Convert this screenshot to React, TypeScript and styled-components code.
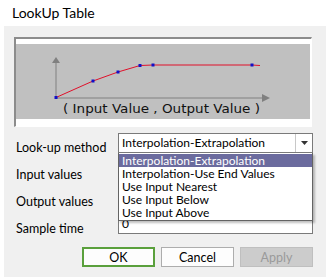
import styled, { createGlobalStyle } from "styled-components";

const GlobalStyle = createGlobalStyle`
  html, body {
    margin: 0;
    padding: 0;
    background: #ffffff;
  }
  body {
    width: 331px;
    height: 280px;
    overflow: hidden;
    font-family: Lato, "Noto Sans", sans-serif;
    font-size: 12.5px;
    color: #000;
  }
`;

const METHODS = [
  "Interpolation-Extrapolation",
  "Interpolation-Use End Values",
  "Use Input Nearest",
  "Use Input Below",
  "Use Input Above",
];

const POINTS: [number, number][] = [
  [40, 53.5],
  [77, 37],
  [102, 28],
  [124, 21.5],
  [137, 21],
  [236, 21],
];

function Chart() {
  const line = [...POINTS, [244, 21.5]].map((p) => p.join(",")).join(" ");
  return (
    <ChartSvg width={294} height={75} viewBox="0 0 294 75">
      <rect width="294" height="75" fill="#c0c0c0" />
      {/* axes */}
      <line x1="40" y1="54" x2="40" y2="18" stroke="#808080" strokeWidth="1" />
      <polygon points="36,19 44,19 40,13" fill="#808080" />
      <line x1="40" y1="54" x2="247" y2="54" stroke="#808080" strokeWidth="1" />
      <polygon points="246,50 246,58 254,54" fill="#808080" />
      <polyline points={line} fill="none" stroke="#e0102a" strokeWidth="1" />
      {POINTS.map(([x, y]) => (
        <rect key={x} x={x - 1.5} y={y - 1.5} width="3" height="3" fill="#1010c8" />
      ))}
      <text
        x="47"
        y="69"
        textLength="197"
        lengthAdjust="spacingAndGlyphs"
        fontFamily="'DejaVu Sans', sans-serif"
        fontSize="12.5"
        fill="#111"
      >
        ( Input Value , Output Value )
      </text>
    </ChartSvg>
  );
}

export default function App() {
  return (
    <>
      <GlobalStyle />
      <TitleBar>LookUp Table</TitleBar>
      <Panel>
        <ChartBox>
          <Chart />
        </ChartBox>

        <Form>
          <Label>Look-up method</Label>
          <SelectWrap>
            <Select>
              <span>Interpolation-Extrapolation</span>
              <ArrowButton>
                <svg width="7" height="4" viewBox="0 0 7 4">
                  <polygon points="0,0 7,0 3.5,4" fill="#333" />
                </svg>
              </ArrowButton>
            </Select>
            <DropList>
              {METHODS.map((m, i) => (
                <DropItem key={m} $active={i === 0}>
                  {m}
                </DropItem>
              ))}
            </DropList>
          </SelectWrap>

          <Label>Input values</Label>
          <TextBox />

          <Label>Output values</Label>
          <TextBox />

          <Label $last>Sample time</Label>
          <TextBox $last>0</TextBox>
        </Form>

        <Buttons>
          <Button $variant="default">OK</Button>
          <Button>Cancel</Button>
          <Button $variant="disabled">Apply</Button>
        </Buttons>
      </Panel>
    </>
  );
}

const TitleBar = styled.div`
  height: 26px;
  box-sizing: border-box;
  padding: 4px 0 0 12px;
  font-size: 14px;
  line-height: 18px;
  color: #000;
`;

const Panel = styled.div`
  margin: 0 5px 0 4px;
  height: 251px;
  box-sizing: border-box;
  background: #f0f0f0;
  padding: 11px 0 0 10px;
  display: flex;
  flex-direction: column;
`;

const ChartBox = styled.div`
  width: 298px;
  height: 90px;
  box-sizing: border-box;
  background: #ffffff;
  border-top: 2px solid #8c8c8c;
  border-left: 2px solid #8c8c8c;
  border-right: 1px solid #ffffff;
  border-bottom: 1px solid #ffffff;
  padding-top: 5px;
`;

const ChartSvg = styled.svg`
  display: block;
`;

const Form = styled.div`
  display: grid;
  grid-template-columns: 102px 195px;
  grid-auto-rows: 20px;
  row-gap: 7px;
  margin: 6px 0 0 2px;
`;

const Label = styled.div<{ $last?: boolean }>`
  padding-top: ${(p) => (p.$last ? 7 : 7)}px;
  line-height: 16px;
  white-space: nowrap;
`;

const SelectWrap = styled.div`
  position: relative;
  z-index: 2;
`;

const Select = styled.div`
  height: 20px;
  box-sizing: border-box;
  border: 1px solid #7a7a7a;
  background: #fff;
  display: flex;
  align-items: center;
  padding-left: 3px;
  font-size: 12px;
  span {
    flex: 1;
    line-height: 16px;
  }
`;

const ArrowButton = styled.div`
  width: 16px;
  height: 100%;
  border-left: 1px solid #c8c8c8;
  display: flex;
  align-items: center;
  justify-content: center;
`;

const DropList = styled.div`
  position: absolute;
  left: 0;
  top: 20px;
  width: 195px;
  box-sizing: border-box;
  border: 1px solid #646464;
  border-top: none;
  background: #fff;
  box-shadow: 2px 2px 2px rgba(0, 0, 0, 0.25);
  padding: 1px 0 1px;
  font-size: 12px;
`;

const DropItem = styled.div<{ $active?: boolean }>`
  height: 13px;
  line-height: 13px;
  padding-left: 3px;
  white-space: nowrap;
  background: ${(p) => (p.$active ? "#6b6b9e" : "transparent")};
  color: ${(p) => (p.$active ? "#fff" : "#000")};
`;

const TextBox = styled.div<{ $last?: boolean }>`
  height: ${(p) => (p.$last ? 18 : 20)}px;
  margin-top: ${(p) => (p.$last ? 2 : 0)}px;
  box-sizing: border-box;
  border: 1px solid #7a7a7a;
  background: #fff;
  padding: 0 3px;
  display: flex;
  align-items: flex-end;
  line-height: 12px;
  font-size: 12px;
  padding-bottom: 3px;
`;

const Buttons = styled.div`
  display: flex;
  justify-content: flex-end;
  gap: 6px;
  width: 299px;
  margin-top: 13px;
`;

const Button = styled.div<{ $variant?: "default" | "disabled" }>`
  width: 73px;
  height: 20px;
  box-sizing: border-box;
  display: flex;
  align-items: center;
  justify-content: center;
  background: ${(p) => (p.$variant === "disabled" ? "#cccccc" : "#fdfdfd")};
  border: ${(p) =>
    p.$variant === "default"
      ? "2px solid #5aa03c"
      : p.$variant === "disabled"
      ? "1px solid #bfbfbf"
      : "1px solid #adadad"};
  color: ${(p) => (p.$variant === "disabled" ? "#9a9a9a" : "#000")};
`;
